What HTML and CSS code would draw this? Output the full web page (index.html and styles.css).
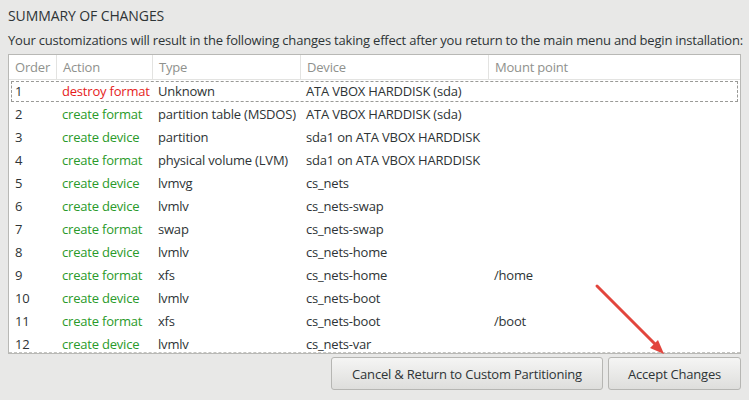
FILE: index.html
```html
<!DOCTYPE html>
<html lang="en">
<head>
    <meta charset="UTF-8">
    <title>Summary of Changes</title>
    <link rel="stylesheet" href="styles.css">
</head>
<body>

    <!-- Heading -->
    <h2 class="title">SUMMARY OF CHANGES</h2>
    <p class="intro">Your customizations will result in the following changes taking effect after you return to the main menu and begin installation:</p>

    <!-- Changes list -->
    <div class="changes">
        <div class="row head">
            <div class="cell c-order">Order</div>
            <div class="cell c-action">Action</div>
            <div class="cell c-type">Type</div>
            <div class="cell c-device">Device</div>
            <div class="cell c-mount">Mount point</div>
        </div>
        <div class="rows">
            <div class="row selected">
                <div class="cell c-order">1</div>
                <div class="cell c-action destroy">destroy format</div>
                <div class="cell c-type">Unknown</div>
                <div class="cell c-device">ATA VBOX HARDDISK (sda)</div>
                <div class="cell c-mount"></div>
            </div>
            <div class="row">
                <div class="cell c-order">2</div>
                <div class="cell c-action create">create format</div>
                <div class="cell c-type">partition table (MSDOS)</div>
                <div class="cell c-device">ATA VBOX HARDDISK (sda)</div>
                <div class="cell c-mount"></div>
            </div>
            <div class="row">
                <div class="cell c-order">3</div>
                <div class="cell c-action create">create device</div>
                <div class="cell c-type">partition</div>
                <div class="cell c-device">sda1 on ATA VBOX HARDDISK</div>
                <div class="cell c-mount"></div>
            </div>
            <div class="row">
                <div class="cell c-order">4</div>
                <div class="cell c-action create">create format</div>
                <div class="cell c-type">physical volume (LVM)</div>
                <div class="cell c-device">sda1 on ATA VBOX HARDDISK</div>
                <div class="cell c-mount"></div>
            </div>
            <div class="row">
                <div class="cell c-order">5</div>
                <div class="cell c-action create">create device</div>
                <div class="cell c-type">lvmvg</div>
                <div class="cell c-device">cs_nets</div>
                <div class="cell c-mount"></div>
            </div>
            <div class="row">
                <div class="cell c-order">6</div>
                <div class="cell c-action create">create device</div>
                <div class="cell c-type">lvmlv</div>
                <div class="cell c-device">cs_nets-swap</div>
                <div class="cell c-mount"></div>
            </div>
            <div class="row">
                <div class="cell c-order">7</div>
                <div class="cell c-action create">create format</div>
                <div class="cell c-type">swap</div>
                <div class="cell c-device">cs_nets-swap</div>
                <div class="cell c-mount"></div>
            </div>
            <div class="row">
                <div class="cell c-order">8</div>
                <div class="cell c-action create">create device</div>
                <div class="cell c-type">lvmlv</div>
                <div class="cell c-device">cs_nets-home</div>
                <div class="cell c-mount"></div>
            </div>
            <div class="row">
                <div class="cell c-order">9</div>
                <div class="cell c-action create">create format</div>
                <div class="cell c-type">xfs</div>
                <div class="cell c-device">cs_nets-home</div>
                <div class="cell c-mount">/home</div>
            </div>
            <div class="row">
                <div class="cell c-order">10</div>
                <div class="cell c-action create">create device</div>
                <div class="cell c-type">lvmlv</div>
                <div class="cell c-device">cs_nets-boot</div>
                <div class="cell c-mount"></div>
            </div>
            <div class="row">
                <div class="cell c-order">11</div>
                <div class="cell c-action create">create format</div>
                <div class="cell c-type">xfs</div>
                <div class="cell c-device">cs_nets-boot</div>
                <div class="cell c-mount">/boot</div>
            </div>
            <div class="row">
                <div class="cell c-order">12</div>
                <div class="cell c-action create">create device</div>
                <div class="cell c-type">lvmlv</div>
                <div class="cell c-device">cs_nets-var</div>
                <div class="cell c-mount"></div>
            </div>
        </div>
    </div>

    <!-- Dialog buttons -->
    <div class="buttons">
        <button class="btn btn-cancel">Cancel &amp; Return to Custom Partitioning</button>
        <button class="btn btn-accept">Accept Changes</button>
    </div>

    <!-- Annotation arrow -->
    <svg class="arrow" width="749" height="400" viewBox="0 0 749 400">
        <line x1="597" y1="286" x2="656" y2="345" stroke="#e2453d" stroke-width="3" stroke-linecap="round"/>
        <polygon points="664,354 650,348 658,340" fill="#e2453d"/>
    </svg>

</body>
</html>
```

FILE: styles.css
```css
body {
    font-family: "Open Sans", sans-serif;
    font-size: 13px;
    letter-spacing: -0.2px;
    color: #2e3436;
    background-color: #e8e8e7;
    margin: 0;
    padding: 6px 8px 0 8px;
    position: relative;
    height: 394px;
    overflow: hidden;
}
.title {
    font-size: 14px;
    font-weight: normal;
    letter-spacing: -0.1px;
    line-height: 20px;
    margin: 0;
}
.intro {
    line-height: 20px;
    margin: 4px 0 0 0;
    white-space: nowrap;
}
.changes {
    margin-top: 4px;
    width: 731px;
    background-color: #ffffff;
    border: 1px solid #b8b8b5;
}
.row {
    display: flex;
    height: 23px;
    line-height: 23px;
}
.cell {
    box-sizing: border-box;
    padding-left: 5px;
    white-space: nowrap;
    overflow: hidden;
}
.c-order { width: 48px; padding-left: 6px; }
.c-action { width: 96px; }
.c-type { width: 148px; }
.c-device { width: 188px; }
.c-mount { flex: 1; }
.head {
    height: 24px;
    line-height: 24px;
    color: #8f918d;
    border-bottom: 1px solid #e3e3e1;
}
.head .cell {
    padding-left: 6px;
    border-right: 1px solid #e3e3e1;
}
.head .c-mount {
    border-right: none;
}
.rows {
    height: 272px;
    overflow: hidden;
    border-bottom: 1px dashed #c4c4c1;
}
.selected {
    margin: 1px 2px 1px 2px;
    height: 19px;
    line-height: 19px;
    border: 1px dashed #9a9a97;
}
.selected .c-order { width: 45px; padding-left: 3px; }
.destroy { color: #e61c1c; }
.create { color: #2a9a2a; }
.buttons {
    display: flex;
    justify-content: flex-end;
    gap: 5px;
    margin-top: 3px;
}
.btn {
    font-family: "Open Sans", sans-serif;
    font-size: 13px;
    letter-spacing: -0.2px;
    color: #2e3436;
    height: 33px;
    border: 1px solid #b6b6b3;
    border-radius: 3px;
    background: linear-gradient(#f5f5f4, #dededc);
}
.btn-cancel { width: 272px; }
.btn-accept { width: 133px; }
.arrow {
    position: absolute;
    left: 0;
    top: 0;
    pointer-events: none;
}
```
